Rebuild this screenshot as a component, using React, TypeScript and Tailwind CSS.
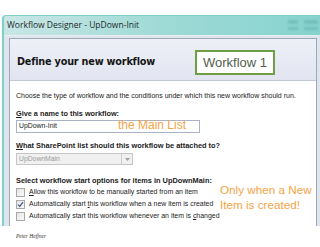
import React from 'react'

const font = { fontFamily: '"Liberation Sans", Arial, sans-serif' }

function Check({ checked }: { checked?: boolean }) {
  return (
    <span className="w-[9px] h-[9px] border border-[#a9a9a9] bg-gradient-to-br from-[#e4e4e4] to-[#fafafa] flex items-center justify-center shrink-0">
      {checked && (
        <svg width="7" height="7" viewBox="0 0 7 7">
          <path d="M1 3.6 L2.8 5.4 L6 1.2" stroke="#3b4f86" strokeWidth="1.2" fill="none" />
        </svg>
      )}
    </span>
  )
}

export default function App() {
  return (
    <div className="w-[320px] h-[247px] bg-white relative overflow-hidden" style={font}>
      <div className="h-[15px]" />
      {/* window */}
      <div className="ml-[2px] h-[211px] rounded-tl-[4px] border-l-[2px] border-t border-[#7fcfca] bg-gradient-to-r from-[#c9e6e6] via-[#9fdad6] to-[#86d3ce] flex flex-col">
        <div className="h-[19px] flex items-center pl-[3px] relative">
          <span className="text-[8.5px] text-[#1e2a2a]" style={{ fontFamily: '"Open Sans", sans-serif' }}>
            Workflow Designer - UpDown-Init
          </span>
          <div className="absolute right-[2px] top-[4px] flex gap-[6px] opacity-40">
            <span className="w-[10px] h-[4px] bg-[#5a9e9a] blur-[1px]" />
            <span className="w-[14px] h-[4px] bg-[#5a9e9a] blur-[1px]" />
          </div>
          <div className="absolute right-[2px] top-[11px] flex gap-[6px] opacity-40">
            <span className="w-[10px] h-[3px] bg-[#5a9e9a] blur-[1px]" />
            <span className="w-[14px] h-[3px] bg-[#5a9e9a] blur-[1px]" />
          </div>
        </div>
        <div className="flex-1 border-t border-[#e8eef0] bg-[#dfe5ee] pl-[5px] pr-[3px] pt-[2px] flex">
          <div className="flex-1 border-l border-t border-r border-[#a0a8b8] flex flex-col">
            {/* header */}
            <div className="h-[42px] bg-gradient-to-b from-[#eef0f8] to-[#e2e5f1] border-b border-[#c4c9d8] flex items-center pl-[7px] pt-[5px]">
              <span className="text-[9.7px] font-bold text-[#151515]" style={{ fontFamily: '"DejaVu Sans", sans-serif', letterSpacing: '-0.2px' }}>
                Define your new workflow
              </span>
            </div>
            {/* content */}
            <div className="flex-1 bg-white pl-[6px] pt-[11px] text-[#222] flex flex-col">
              <div className="text-[7px] leading-[8px]">
                Choose the type of workflow and the conditions under which this new workflow should run.
              </div>
              <div className="mt-[10px] text-[7.3px] font-bold leading-[8px]">
                <span className="underline">G</span>ive a name to this workflow:
              </div>
              <div className="mt-[2px] w-[184px] h-[13px] border border-[#a9b3c3] flex items-center pl-[2px] text-[6.9px]">
                UpDown-Init
              </div>
              <div className="mt-[9px] text-[7.4px] font-bold leading-[8px]">
                <span className="underline">W</span>hat SharePoint list should this workflow be attached to?
              </div>
              <div className="mt-[3px] w-[117px] h-[12px] border border-[#c6c6c6] bg-[#f0f0f0] flex items-center justify-between text-[6.8px] text-[#9a9a9a]">
                <span className="pl-[2px]">UpDownMain</span>
                <span className="w-[11px] h-full border-l border-[#cfcfcf] flex items-center justify-center">
                  <svg width="5" height="3" viewBox="0 0 5 3">
                    <path d="M0 0 L5 0 L2.5 3 Z" fill="#a0a0a0" />
                  </svg>
                </span>
              </div>
              <div className="mt-[12px] text-[7.4px] font-bold leading-[8px]">
                Select workflow start options for items in UpDownMain:
              </div>
              <div className="mt-[3px] flex flex-col gap-[3px] text-[6.95px]">
                <div className="flex items-center gap-[4px] h-[9px]">
                  <Check />
                  <span><span className="underline">A</span>llow this workflow to be manually started from an item</span>
                </div>
                <div className="flex items-center gap-[4px] h-[9px]">
                  <Check checked />
                  <span>Automatically start <span className="underline">t</span>his workflow when a new item is created</span>
                </div>
                <div className="flex items-center gap-[4px] h-[9px]">
                  <Check />
                  <span>Automatically start this workflow whenever an item is <span className="underline">c</span>hanged</span>
                </div>
              </div>
            </div>
          </div>
        </div>
      </div>
      <div className="pl-[16px] pt-[6px] text-[5.5px] italic text-[#333]" style={{ fontFamily: '"Liberation Serif", serif' }}>
        Peter Heffner
      </div>

      {/* overlays */}
      <div className="absolute left-[195px] top-[50px] w-[80px] h-[25px] border-2 border-[#6f9f45] bg-white flex items-center justify-center text-[13px] text-[#55604d]">
        Workflow 1
      </div>
      <div className="absolute left-[118px] top-[118px] text-[12px] text-[#f3a447] leading-[14px]">
        the Main List
      </div>
      <div className="absolute left-[220px] top-[182px] text-[11.7px] text-[#f3a447] leading-[15px]">
        Only when a New
        <br />
        Item is created!
      </div>
    </div>
  )
}
